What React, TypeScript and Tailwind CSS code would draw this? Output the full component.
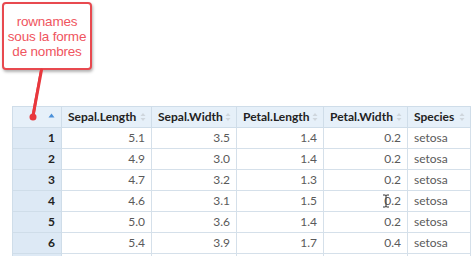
import React from 'react';

const cols = ['Sepal.Length', 'Sepal.Width', 'Petal.Length', 'Petal.Width', 'Species'];
const widths = ['w-[90px]', 'w-[85px]', 'w-[87px]', 'w-[84px]', 'w-[63px]'];

const rows = [
  ['5.1', '3.5', '1.4', '0.2', 'setosa'],
  ['4.9', '3.0', '1.4', '0.2', 'setosa'],
  ['4.7', '3.2', '1.3', '0.2', 'setosa'],
  ['4.6', '3.1', '1.5', '0.2', 'setosa'],
  ['5.0', '3.6', '1.4', '0.2', 'setosa'],
  ['5.4', '3.9', '1.7', '0.4', 'setosa'],
];

function SortIcon() {
  return (
    <svg width="6" height="10" viewBox="0 0 6 10" className="absolute right-[5px] top-[5px]">
      <path d="M3 1 L5.5 4 H0.5 Z" fill="#cfd6dd" />
      <path d="M3 9 L5.5 6 H0.5 Z" fill="#cfd6dd" />
    </svg>
  );
}

export default function App() {
  return (
    <div className="relative w-[474px] h-[256px] overflow-hidden bg-white font-['Lato','Open_Sans',sans-serif]">
      {/* callout */}
      <div className="absolute left-[2px] top-[2px] w-[90px] h-[68px] rounded-[4px] border-2 border-[#e8494f] bg-white shadow-[1px_2px_3px_rgba(0,0,0,0.3)] flex items-center justify-center text-center text-[13.5px] leading-[15px] tracking-[-0.2px] text-[#ef5560] font-['Liberation_Sans',sans-serif] z-10">
        rownames
        <br />
        sous la forme
        <br />
        de nombres
      </div>
      <svg className="absolute left-0 top-0 z-10" width="80" height="130">
        <path d="M42 70 L40 70 L31.5 116 L34.5 116 Z" fill="#e8383d" />
        <path d="M41.5 70 L33 116" stroke="#e8383d" strokeWidth="3" strokeLinecap="round" />
        <circle cx="33" cy="117" r="3.5" fill="#e8383d" />
      </svg>

      {/* table */}
      <div className="pt-[106px] pl-[12px]">
        <table className="border-collapse table-fixed text-[12px] text-[#5a5a5a]">
          <thead>
            <tr className="h-[21px] bg-[#e6f0f9]">
              <th className="relative w-[49px] border border-[#cfdde9]">
                <svg width="7" height="5" viewBox="0 0 7 5" className="absolute right-[6px] top-[6px]">
                  <path d="M3.5 0.5 L6.5 4.5 H0.5 Z" fill="#4a90d9" />
                </svg>
              </th>
              {cols.map((c, i) => (
                <th
                  key={c}
                  className={`relative ${widths[i]} border border-[#cfdde9] px-[6px] text-left font-bold text-[#222]`}
                >
                  {c}
                  <SortIcon />
                </th>
              ))}
            </tr>
          </thead>
          <tbody>
            {rows.map((r, i) => (
              <tr key={i} className="h-[21px]">
                <td className="border border-[#cfdde9] bg-[#dde9f5] px-[6px] text-right font-bold text-[#222]">{i + 1}</td>
                {r.map((v, j) => (
                  <td
                    key={j}
                    className={`border border-[#d5e0ea] px-[6px] ${j === 4 ? 'text-left' : 'text-right'}`}
                  >
                    {v}
                  </td>
                ))}
              </tr>
            ))}
            <tr className="h-[21px]">
              <td className="border border-[#cfdde9] bg-[#dde9f5]" />
              {cols.map((c) => (
                <td key={c} className="border border-[#d5e0ea]" />
              ))}
            </tr>
          </tbody>
        </table>
      </div>

      {/* text cursor */}
      <svg className="absolute left-[382px] top-[194px]" width="8" height="14" viewBox="0 0 8 14">
        <path d="M1 1 H3 Q4 1 4 2 V12 Q4 13 3 13 H1 M7 1 H5 Q4 1 4 2 M4 12 Q4 13 5 13 H7" stroke="#333" strokeWidth="1" fill="none" />
      </svg>
    </div>
  );
}
